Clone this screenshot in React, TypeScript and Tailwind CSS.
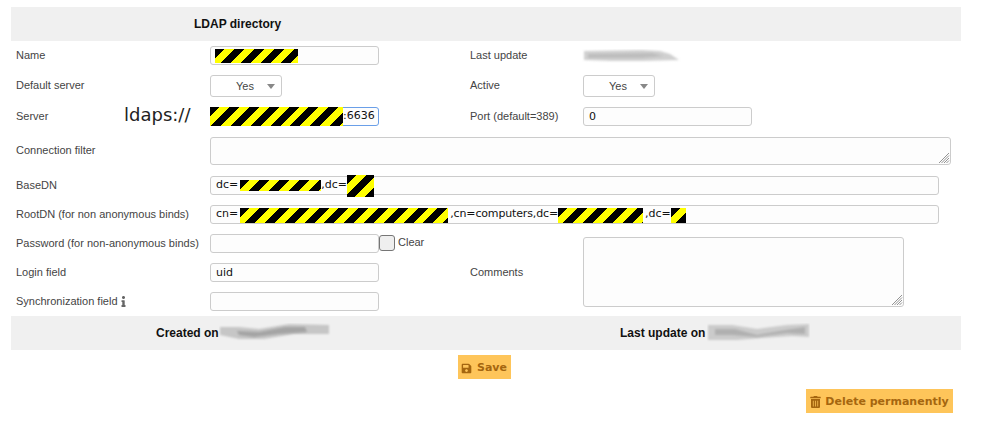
import { FaInfo, FaSave, FaTrashAlt } from 'react-icons/fa';

const hazard =
  'bg-[repeating-linear-gradient(135deg,#000_0,#000_7px,#ff0_7px,#ff0_14px)]';
const label = 'pl-[5px] text-[11px] leading-none text-[#444]';
const rightLabel = 'text-[11px] leading-none text-[#444]';
const field =
  'h-[19px] rounded-[3px] border border-[#ccc] bg-[#fdfdfd] px-[5px] text-[11px] text-[#111] font-["DejaVu_Sans",sans-serif] outline-none';
const orangeBtn =
  'flex h-6 items-center justify-center bg-[#fec55a] pt-[2px] text-[11px] font-bold text-[#a5660f] font-["DejaVu_Sans",sans-serif]';

function Redact({ className }: { className: string }) {
  return <span className={`block shrink-0 ${hazard} ${className}`} />;
}

// blurred-out dates in the screenshot
function Smudge({ id, w, h, outer, inner, fill = '#c4c4c4', dark = '#aaaaaa' }: {
  id: string;
  w: number;
  h: number;
  outer: string;
  inner: string;
  fill?: string;
  dark?: string;
}) {
  return (
    <svg width={w} height={h} viewBox={`0 0 ${w} ${h}`} className="block shrink-0">
      <defs>
        <filter id={id} x="-10%" y="-40%" width="120%" height="180%">
          <feGaussianBlur stdDeviation="1.3" />
        </filter>
      </defs>
      <path d={outer} fill={fill} filter={`url(#${id})`} />
      <path d={inner} fill={dark} filter={`url(#${id})`} />
    </svg>
  );
}

function Grip() {
  return (
    <svg width="12" height="12" viewBox="0 0 12 12" className="pointer-events-none absolute bottom-px right-px" stroke="#777" strokeWidth="0.8">
      <path d="M1 11 L11 1 M3.5 11 L11 3.5 M6 11 L11 6 M8.5 11 L11 8.5" />
    </svg>
  );
}

function YesSelect() {
  return (
    <div className="flex h-[22px] w-[72px] items-center rounded-[3px] border border-[#ccc] bg-white text-[11px] text-[#444]">
      <span className="ml-[25px]">Yes</span>
      <span className="ml-[13px] h-0 w-0 border-x-[4px] border-t-[5px] border-x-transparent border-t-[#888]" />
    </div>
  );
}

export default function App() {
  return (
    <div className='h-[447px] w-[981px] overflow-hidden bg-white pl-[11px] pt-[7px] font-["Liberation_Sans",Arial,sans-serif]'>
      <div className="grid w-[950px] grid-cols-[199px_260px_113px_1fr] grid-rows-[34px_29px_32px_29px_40px_29px_29px_29px_29px_29px_34px] items-center">
        {/* Header */}
        <div className="col-span-4 flex h-full items-center bg-[#f0f0f0] pl-[183px] text-xs font-bold text-[#111]">
          LDAP directory
        </div>

        {/* Name / last update */}
        <div className={label}>Name</div>
        <div className={`${field} flex w-[169px] items-center !px-0`}>
          <Redact className="ml-[4px] h-[14px] w-[83px]" />
        </div>
        <div className={rightLabel}>Last update</div>
        <div className="-ml-px">
          <Smudge
            id="s-top"
            w={100}
            h={14}
            fill="#d0d0d0"
            dark="#bdbdbd"
            outer="M2 2 L60 1 L78 2 L88 5 L97 11 L60 12 L30 12 L2 11 Z"
            inner="M6 5 L70 4 L82 7 L60 9 L6 9 Z"
          />
        </div>

        {/* Default server / active */}
        <div className={`${label} -mt-[2px]`}>Default server</div>
        <YesSelect />
        <div className={`${rightLabel} -mt-[2px]`}>Active</div>
        <YesSelect />

        {/* Server / port */}
        <div className={`${label} relative`}>
          Server
          <span className='absolute left-[113px] top-[-7px] text-lg leading-[22px] text-[#222] font-["DejaVu_Sans",sans-serif]'>
            ldaps://
          </span>
        </div>
        <div className={`${field} flex w-[169px] items-center justify-between !border-[#6a9fe8] !px-0`}>
          <Redact className="-ml-px h-[19px] w-[133px]" />
          <span className="pr-[4px]">:6636</span>
        </div>
        <div className={rightLabel}>Port (default=389)</div>
        <input readOnly defaultValue="0" className={`${field} w-[169px]`} />

        {/* Connection filter */}
        <div className={`${label} -mt-[2px]`}>Connection filter</div>
        <div className="relative col-span-3 w-[741px]">
          <textarea readOnly className="block h-[28px] w-full resize-none rounded-[3px] border border-[#ccc] bg-[#fdfdfd] outline-none" />
          <Grip />
        </div>

        {/* BaseDN */}
        <div className={label}>BaseDN</div>
        <div className={`${field} col-span-3 flex w-[729px] items-center`}>
          <span>dc=</span>
          <Redact className="ml-[2px] h-[11px] w-[81px]" />
          <span>,dc=</span>
          <Redact className="h-[22px] w-[27px]" />
        </div>

        {/* RootDN */}
        <div className={label}>RootDN (for non anonymous binds)</div>
        <div className={`${field} col-span-3 flex w-[729px] items-center`}>
          <span>cn=</span>
          <Redact className="ml-[2px] mt-[2px] h-[15px] w-[208px]" />
          <span className="ml-[2px] tracking-[-0.15px]">,cn=computers,dc=</span>
          <Redact className="mt-[2px] h-[15px] w-[85px]" />
          <span className="ml-[2px]">,dc=</span>
          <Redact className="mt-[2px] h-[15px] w-[15px]" />
        </div>

        {/* Password + Comments */}
        <div className={label}>Password (for non-anonymous binds)</div>
        <div className="flex items-center">
          <input readOnly type="text" className={`${field} w-[169px]`} />
          <span className="-mt-[2px] h-4 w-4 shrink-0 rounded-[3px] border border-[#767676] bg-[#efefef]" />
          <span className="-mt-[2px] ml-[3px] text-[11px] leading-none text-[#444]">Clear</span>
        </div>
        <div className={`${rightLabel} row-span-3`}>Comments</div>
        <div className="relative row-span-3 -mt-[2px] w-[321px]">
          <textarea readOnly className="block h-[70px] w-full resize-none rounded-[3px] border border-[#ccc] bg-[#fdfdfd] outline-none" />
          <Grip />
        </div>

        <div className={label}>Login field</div>
        <input readOnly defaultValue="uid" className={`${field} w-[169px]`} />

        <div className={`${label} flex items-center gap-[3px]`}>
          Synchronization field
          <FaInfo className="h-[11px] w-[5px] text-[#666]" />
        </div>
        <input readOnly className={`${field} w-[169px]`} />

        {/* Footer */}
        <div className="col-span-4 flex h-full items-center bg-[#f0f0f0] text-xs font-bold text-[#111]">
          <div className="flex w-[459px] items-center pl-[145px]">
            Created on
            <Smudge
              id="s-created"
              w={112}
              h={20}
              fill="#c6c6c6"
              dark="#a4a4a4"
              outer="M1 4 L20 4 L40 6 L70 1 L110 2 L110 11 L75 11 L45 16 L20 16 L1 12 Z"
              inner="M18 8 L40 9 L66 4 L86 4 L88 9 L60 11 L35 14 L20 12 Z"
            />
          </div>
          <div className="flex items-center pl-[150px]">
            Last update on
            <span className="w-[2px]" />
            <Smudge
              id="s-update"
              w={103}
              h={20}
              fill="#cbcbcb"
              dark="#b0b0b0"
              outer="M1 2 L25 2 L50 6 L80 2 L102 1 L102 14 L85 13 L55 15 L30 17 L1 17 Z"
              inner="M8 6 L28 6 L50 12 L78 7 L98 4 L98 11 L80 10 L50 14 L25 12 L8 12 Z"
            />
          </div>
        </div>
      </div>

      <div className="mt-[5px] flex justify-center pr-[24px]">
        <button className={`${orangeBtn} w-[53px] gap-[5px]`}>
          <FaSave className="h-[11px] w-[11px]" />
          Save
        </button>
      </div>

      <div className="mt-[10px] flex w-[942px] justify-end">
        <button className={`${orangeBtn} w-[147px] gap-[4px]`}>
          <FaTrashAlt className="h-[12px] w-[11px]" />
          Delete permanently
        </button>
      </div>
    </div>
  );
}
